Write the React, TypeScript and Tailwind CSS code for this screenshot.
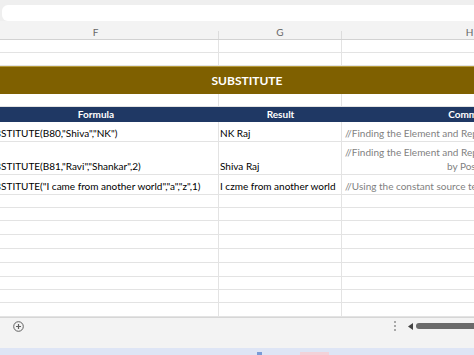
import React from 'react';

const grid = 'grid grid-cols-[246px_123px_256px] ml-[-27px] w-[625px]';
const line = 'border-[#e3e3e3]';

const EmptyRow = ({ h }: { h: string }) => (
  <div className={`${grid} ${h} border-b ${line}`}>
    <div className={`border-r ${line}`} />
    <div className={`border-r ${line}`} />
    <div />
  </div>
);

const rows = [
  {
    h: 'h-[20px]',
    formula: '=SUBSTITUTE(B80,"Shiva","NK")',
    result: 'NK Raj',
    comment: ['//Finding the Element and Replacing with new Text'],
  },
  {
    h: 'h-[33px]',
    formula: '=SUBSTITUTE(B81,"Ravi","Shankar",2)',
    result: 'Shiva Raj',
    comment: ['//Finding the Element and Replacing with new Text', 'by Position'],
  },
  {
    h: 'h-[20px]',
    formula: '=SUBSTITUTE("I came from another world","a","z",1)',
    result: 'I czme from another world',
    comment: ['//Using the constant source text to replace'],
  },
];

const tail = ['h-[13px]', 'h-[13px]', 'h-[14px]', 'h-[14px]', 'h-[14px]', 'h-[14px]', 'h-[13px]', 'h-[13px]', 'h-[14px]'];

const ColHead = ({ label }: { label: string }) => (
  <div className="flex items-end">
    <div className="flex-1 text-center text-[10px] leading-[12px] pb-[1px] text-[#666]">{label}</div>
    <div className="w-px h-[8px] bg-[#dcdcdc]" />
  </div>
);

export default function App() {
  return (
    <div
      className="w-[474px] h-[355px] overflow-hidden bg-white flex flex-col"
      style={{ fontFamily: 'Lato, "Liberation Sans", sans-serif' }}
    >
      {/* formula bar */}
      <div className="h-[21px] bg-[#efefef] pt-[5px] pl-[2px]">
        <div className="h-[16px] bg-white rounded-l-md" />
      </div>

      {/* column letters */}
      <div className="h-[19px] bg-[#f3f3f3] border-b border-[#d2d2d2] overflow-hidden">
        <div className={`${grid} h-full`}>
          <ColHead label="F" />
          <ColHead label="G" />
          <ColHead label="H" />
        </div>
      </div>

      <div className="flex-1 overflow-hidden">
        <EmptyRow h="h-[13px]" />
        <EmptyRow h="h-[13px]" />

        <div className="h-[28px] bg-[#7f6000] border-t border-[#b59a3c] flex items-center">
          <div className="shrink-0 w-[494px] text-center text-white font-bold text-[12px]">SUBSTITUTE</div>
        </div>

        <EmptyRow h="h-[13px]" />

        <div className={`${grid} h-[15px] bg-[#1f3864] text-white font-bold text-[10px] leading-[15px]`}>
          <div className="text-center">Formula</div>
          <div className="text-center">Result</div>
          <div className="text-center">Comment</div>
        </div>

        {rows.map((r) => (
          <div key={r.result} className={`${grid} ${r.h} border-b ${line} text-[10px] leading-[14px]`}>
            <div className={`border-r ${line} flex items-end pb-[1px] pl-[3px] text-black whitespace-nowrap overflow-hidden`}>
              {r.formula}
            </div>
            <div className={`border-r ${line} flex items-end pb-[1px] pl-[1px] text-black whitespace-nowrap overflow-hidden`}>
              {r.result}
            </div>
            <div className="flex flex-col justify-end pb-[1px] pl-[3px] text-[#7f7f7f] whitespace-nowrap">
              <div>{r.comment[0]}</div>
              {r.comment[1] && <div className="pl-[102px]">{r.comment[1]}</div>}
            </div>
          </div>
        ))}

        {tail.map((h, i) => (
          <EmptyRow key={i} h={h} />
        ))}
      </div>

      {/* sheet tabs / scroll bar */}
      <div className="h-[31px] bg-[#f3f3f3] border-t border-[#d6d6d6] flex flex-col">
        <div className="h-[16px] flex items-center">
          <svg className="ml-[13px]" width="11" height="11" viewBox="0 0 11 11">
            <circle cx="5.5" cy="5.5" r="4.8" fill="none" stroke="#606060" strokeWidth="1" />
            <path d="M5.5 3v5M3 5.5h5" stroke="#606060" strokeWidth="1.2" />
          </svg>
          <div className="flex-1" />
          <div className="flex flex-col gap-[2px] mr-[12px]">
            <div className="w-[2px] h-[2px] bg-[#a8a8a8]" />
            <div className="w-[2px] h-[2px] bg-[#a8a8a8]" />
            <div className="w-[2px] h-[2px] bg-[#a8a8a8]" />
          </div>
          <svg width="5" height="7" viewBox="0 0 5 7">
            <path d="M5 0L0 3.5L5 7Z" fill="#444" />
          </svg>
          <div className="ml-[3px] w-[58px] h-[6px] bg-[#6b6b6b] rounded-l-full" />
        </div>
      </div>

      <div className="h-[7px] bg-[#dee5f5] flex items-end">
        <div className="ml-[257px] w-[5px] h-[3px] bg-[#7a9bd6]" />
        <div className="ml-[38px] w-[29px] h-[3px] bg-[#f3d2d9]" />
      </div>
    </div>
  );
}
